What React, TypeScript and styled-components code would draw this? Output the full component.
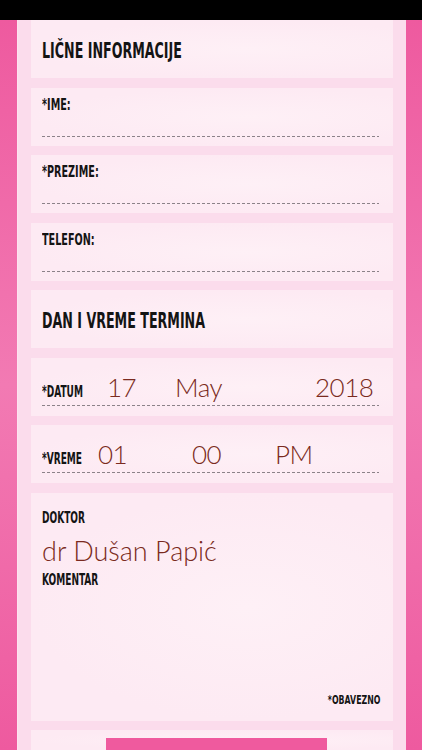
import styled, { createGlobalStyle } from "styled-components";

const GlobalStyle = createGlobalStyle`
  html, body {
    margin: 0;
    padding: 0;
    background: #000;
  }
  * {
    box-sizing: border-box;
  }
`;

const Screen = styled.div`
  width: 422px;
  height: 750px;
  overflow: hidden;
  display: flex;
  flex-direction: column;
`;

const StatusBar = styled.div`
  height: 20px;
  flex-shrink: 0;
  background: #000;
`;

const Backdrop = styled.div`
  flex: 1;
  display: flex;
  padding: 0 16px 0 17px;
  background: linear-gradient(180deg, #ee5a9f 0%, #f27ab3 50%, #ee5a9f 100%);
`;

const Panel = styled.div`
  flex: 1;
  display: flex;
  flex-direction: column;
  gap: 9.5px;
  padding: 0 13px;
  background: #fbdcec;
  border-left: 1px solid #fde3ef;
`;

const Card = styled.div<{ $h?: number }>`
  flex-shrink: 0;
  height: ${(p) => (p.$h ? `${p.$h}px` : "auto")};
  background: radial-gradient(ellipse at 60% 50%, #fef0f6 0%, #fdeaf3 70%);
  display: flex;
  flex-direction: column;
  padding: 0 14px 0 11px;
`;

/* bold condensed caps, squeezed to the width of the poster face in the app */
const Caps = styled.span<{ $size?: number; $right?: boolean }>`
  display: inline-block;
  white-space: nowrap;
  font-family: "DejaVu Sans Condensed", "DejaVu Sans", sans-serif;
  font-stretch: condensed;
  font-weight: 700;
  font-size: ${(p) => p.$size ?? 16}px;
  line-height: 1;
  color: #141414;
  text-transform: uppercase;
  transform: scaleX(0.67);
  transform-origin: ${(p) => (p.$right ? "right" : "left")} center;
`;

const Heading = styled.h2`
  margin: 18px 0 0;
  line-height: 1;
`;

const FieldLabel = styled.div`
  margin-top: 8px;
`;

const Dashed = styled.div`
  height: 1px;
  margin-top: auto;
  margin-bottom: 9px;
  background-image: repeating-linear-gradient(
    90deg,
    #8c8289 0,
    #8c8289 3px,
    transparent 3px,
    transparent 5px
  );
`;

const PickerRow = styled.div`
  margin-top: auto;
  margin-bottom: 10px;
  display: flex;
  align-items: baseline;
  padding-bottom: 5px;
  background-image: repeating-linear-gradient(
    90deg,
    #8c8289 0,
    #8c8289 3px,
    transparent 3px,
    transparent 5px
  );
  background-size: 100% 1px;
  background-repeat: no-repeat;
  background-position: bottom left;
`;

const PickerLabel = styled.div<{ $w: number }>`
  width: ${(p) => p.$w}px;
  flex-shrink: 0;
`;

const Value = styled.span<{ $w: number }>`
  width: ${(p) => p.$w}px;
  flex-shrink: 0;
  font-family: Lato, "Open Sans", sans-serif;
  font-weight: 300;
  font-size: 26px;
  letter-spacing: -0.5px;
  line-height: 1;
  color: #7a2a20;
`;

const DoctorLabel = styled.div`
  margin-top: 16px;
`;

const Doctor = styled.div`
  margin-top: 10px;
  font-family: Lato, "Open Sans", sans-serif;
  font-weight: 300;
  font-size: 27px;
  line-height: 28px;
  color: #7a2a20;
`;

const CommentLabel = styled.div`
  margin-top: 6px;
`;

const Required = styled.div`
  margin-top: auto;
  margin-bottom: 13px;
  align-self: flex-end;
  margin-right: -1px;
`;

const SubmitCard = styled(Card)`
  flex: 1;
  align-items: center;
  padding-top: 8px;
`;

const SubmitButton = styled.button`
  width: 221px;
  flex: 1;
  border: none;
  background: #ef5a9e;
  margin-left: 11px;
`;

export default function App() {
  return (
    <Screen>
      <GlobalStyle />
      <StatusBar />
      <Backdrop>
        <Panel>
          <Card $h={58}>
            <Heading>
              <Caps $size={21}>Lične informacije</Caps>
            </Heading>
          </Card>
          <Card $h={58}>
            <FieldLabel>
              <Caps>*Ime:</Caps>
            </FieldLabel>
            <Dashed />
          </Card>
          <Card $h={58}>
            <FieldLabel>
              <Caps>*Prezime:</Caps>
            </FieldLabel>
            <Dashed />
          </Card>
          <Card $h={58}>
            <FieldLabel>
              <Caps>Telefon:</Caps>
            </FieldLabel>
            <Dashed />
          </Card>
          <Card $h={58}>
            <Heading>
              <Caps $size={21}>Dan i vreme termina</Caps>
            </Heading>
          </Card>
          <Card $h={58}>
            <PickerRow>
              <PickerLabel $w={65}>
                <Caps $size={15}>*Datum</Caps>
              </PickerLabel>
              <Value $w={68}>17</Value>
              <Value $w={140}>May</Value>
              <Value $w={60}>2018</Value>
            </PickerRow>
          </Card>
          <Card $h={58}>
            <PickerRow>
              <PickerLabel $w={56}>
                <Caps $size={15}>*Vreme</Caps>
              </PickerLabel>
              <Value $w={94}>01</Value>
              <Value $w={83}>00</Value>
              <Value $w={60}>PM</Value>
            </PickerRow>
          </Card>
          <Card $h={228}>
            <DoctorLabel>
              <Caps $size={15}>Doktor</Caps>
            </DoctorLabel>
            <Doctor>dr Dušan Papić</Doctor>
            <CommentLabel>
              <Caps $size={15}>Komentar</Caps>
            </CommentLabel>
            <Required>
              <Caps $size={13} $right>
                *Obavezno
              </Caps>
            </Required>
          </Card>
          <SubmitCard>
            <SubmitButton aria-label="Zakaži" />
          </SubmitCard>
        </Panel>
      </Backdrop>
    </Screen>
  );
}
